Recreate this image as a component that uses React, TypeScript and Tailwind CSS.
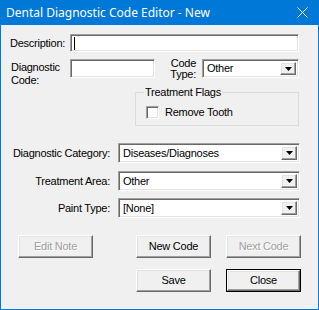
import React from 'react';

const font = { fontFamily: '"Liberation Sans", Arial, sans-serif' };

// sunken 3D edge used by edits, combos and the check box
const sunken =
  'bg-white border border-t-[#a0a0a0] border-l-[#a0a0a0] border-b-white border-r-white shadow-[inset_1px_1px_0_#696969,inset_-1px_-1px_0_#e3e3e3]';

// raised 3D edge used by buttons
const raised =
  'bg-[#f0f0f0] border border-t-white border-l-white border-b-[#696969] border-r-[#696969] shadow-[inset_-1px_-1px_0_#a0a0a0,inset_1px_1px_0_#e3e3e3]';

function Edit({ className, caret }: { className: string; caret?: boolean }) {
  return (
    <div className={`${sunken} ${className} flex items-center pl-[3px]`}>
      {caret && <div className="w-px h-[13px] bg-black" />}
    </div>
  );
}

function Combo({ value, className }: { value: string; className: string }) {
  return (
    <div className={`${sunken} ${className} flex items-stretch p-[2px]`}>
      <div className="flex-1 flex items-center pl-[2px] text-[11px] text-black leading-none">{value}</div>
      <div className={`${raised} w-[16px] flex items-center justify-center`}>
        <svg width="7" height="4" viewBox="0 0 7 4">
          <path d="M0 0h7L3.5 4z" fill="#000" />
        </svg>
      </div>
    </div>
  );
}

function Button({
  label,
  disabled,
  isDefault,
  className = '',
}: {
  label: string;
  disabled?: boolean;
  isDefault?: boolean;
  className?: string;
}) {
  const face = (
    <div
      className={`${raised} flex-1 flex items-center justify-center text-[11px] ${
        disabled ? 'text-[#a0a0a0] [text-shadow:1px_1px_0_#fff]' : 'text-black'
      }`}
    >
      {label}
    </div>
  );
  if (isDefault) {
    return <div className={`w-[75px] h-[23px] border border-black flex ${className}`}>{face}</div>;
  }
  return <div className={`w-[75px] h-[23px] flex ${className}`}>{face}</div>;
}

function ComboRow({ label, value, className }: { label: string; value: string; className: string }) {
  return (
    <div className={`flex items-center ${className}`}>
      <div className="w-[109px] text-right text-[11px] text-black">{label}</div>
      <Combo value={value} className="ml-[8px] w-[182px] h-[20px]" />
    </div>
  );
}

export default function App() {
  return (
    <div className="w-[319px] h-[310px] bg-[#0078d7] flex flex-col px-px pb-px tracking-[-0.25px]" style={font}>
      {/* Title bar */}
      <div className="h-[25px] flex items-center justify-between pl-[5px] pr-[10px] shrink-0 tracking-normal">
        <span className="text-white text-[12px] pt-px" style={{ fontFamily: '"Noto Sans", "Open Sans", sans-serif' }}>
          Dental Diagnostic Code Editor - New
        </span>
        <svg width="11" height="11" viewBox="0 0 11 11">
          <path d="M0.5 0.5l10 10M10.5 0.5l-10 10" stroke="#fff" strokeWidth="1" />
        </svg>
      </div>

      {/* Body */}
      <div className="flex-1 bg-[#f0f0f0] flex flex-col">
        {/* Description */}
        <div className="flex items-center mt-[9px] pl-[9px]">
          <div className="w-[60px] text-[11px] text-black">Description:</div>
          <Edit className="w-[229px] h-[18px]" caret />
        </div>

        {/* Diagnostic code + code type */}
        <div className="flex items-start mt-[7px]">
          <div className="w-[69px] pl-[10px] pt-[2px] text-[11px] leading-[13px] text-black">
            Diagnostic
            <br />
            Code:
          </div>
          <Edit className="w-[85px] h-[19px]" />
          <div className="w-[41px] text-right text-[11px] leading-[11px] text-black -mt-px">
            Code
            <br />
            Type:
          </div>
          <Combo value="Other" className="ml-[6px] w-[97px] h-[19px]" />
        </div>

        {/* Treatment flags */}
        <fieldset className="ml-[134px] w-[164px] h-[40px] border border-[#dcdcdc] px-[8px] -mt-[1px]">
          <legend className="px-[1px] text-[11px] leading-[13px] text-black">Treatment Flags</legend>
          <div className="flex items-center mt-[5px] ml-[2px]">
            <div className={`${sunken} w-[13px] h-[13px]`} />
            <span className="ml-[6px] text-[11px] text-black">Remove Tooth</span>
          </div>
        </fieldset>

        <ComboRow label="Diagnostic Category:" value="Diseases/Diagnoses" className="mt-[17px]" />
        <ComboRow label="Treatment Area:" value="Other" className="mt-[8px]" />
        <ComboRow label="Paint Type:" value="[None]" className="mt-[7px]" />

        {/* Buttons */}
        <div className="flex mt-[17px]">
          <Button label="Edit Note" disabled className="ml-[17px]" />
          <Button label="New Code" className="ml-[43px]" />
          <Button label="Next Code" disabled className="ml-[15px]" />
        </div>
        <div className="flex mt-[11px]">
          <Button label="Save" className="ml-[135px]" />
          <Button label="Close" isDefault className="ml-[15px]" />
        </div>
      </div>
    </div>
  );
}
